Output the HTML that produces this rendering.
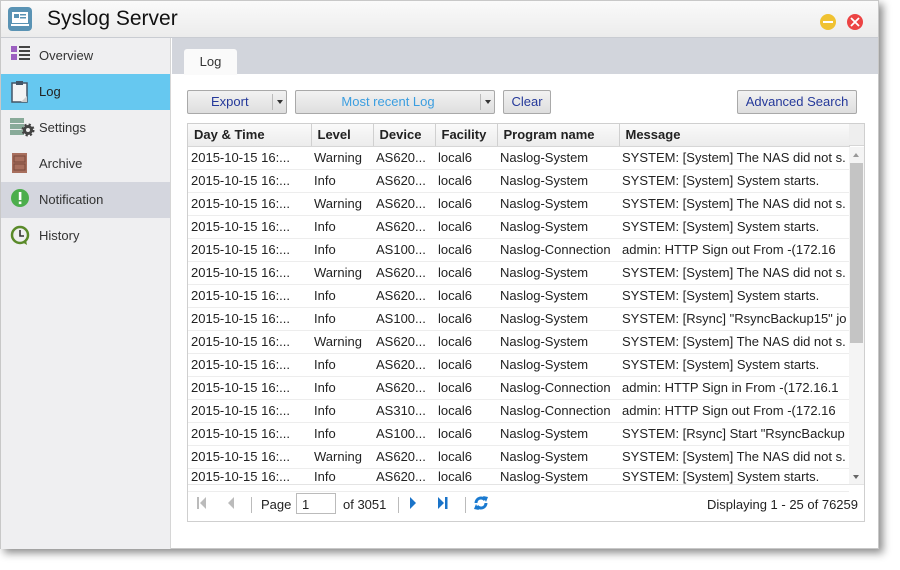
<!DOCTYPE html>
<html><head><meta charset="utf-8"><style>
*{box-sizing:border-box;margin:0;padding:0}
body{width:900px;height:570px;background:#fff;font-family:"Liberation Sans",sans-serif;position:relative;overflow:hidden}
.win{position:absolute;left:0;top:0;width:879px;height:549px;background:#fff;border:1px solid #c8c8c8;box-shadow:4px 4px 8px rgba(0,0,0,.45)}
.title{position:absolute;left:0;top:0;width:877px;height:37px;background:linear-gradient(#fafafa,#ececec);border-bottom:1px solid #c9ccd2}
.title .t{position:absolute;left:46px;top:6px;font-size:21px;color:#111}
.side{position:absolute;left:0;top:37px;width:170px;height:511px;background:#efeff1;border-right:1px solid #d6d6d6}
.item{height:36px;position:relative;font-size:13px;color:#333;line-height:36px;padding-left:38px}
.item.sel{background:#66c8f0;color:#222}
.item.hov{background:#d4d6de}
.ic{position:absolute;left:9px;top:7px}
.band{position:absolute;left:171px;top:37px;width:706px;height:36px;background:#d2d5dc}
.tab{position:absolute;left:183px;top:48px;width:53px;height:26px;background:#fafafa;border-radius:3px 3px 0 0;font-size:13px;color:#333;text-align:center;line-height:26px}
.btn{position:absolute;height:24px;border:1px solid #a9a9a9;border-radius:2px;background:linear-gradient(#f2f2f2,#dedede);font-size:13px;color:#25399a;line-height:22px;text-align:center}
.dd{position:absolute;right:0;top:3px;width:14px;height:16px;border-left:1px solid #bbb}
.dd:after{content:"";position:absolute;left:4px;top:6px;border:3px solid transparent;border-top:4px solid #333}
.grid{position:absolute;left:186px;top:122px;width:678px;height:399px;border:1px solid #cfcfcf}
table{border-collapse:collapse;font-size:13px;color:#222;table-layout:fixed;position:absolute;left:0;top:0;width:661px}
th{height:22px;background:linear-gradient(#fafafa,#ececec);text-align:left;font-weight:bold;padding-left:6px;border-right:1px solid #d0d0d0;border-bottom:1px solid #d6d6d6}
td{height:23px;padding-left:3px;white-space:nowrap;overflow:hidden;border-bottom:1px solid #ededed}
.hdrfill{position:absolute;left:661px;top:0;width:15px;height:22px;background:#eee;border-bottom:1px solid #d6d6d6}
.sb{position:absolute;left:661px;top:23px;width:15px;height:337px;background:#f4f4f4}
.thumb{position:absolute;left:1px;top:16px;width:13px;height:180px;background:#c4c4c4}
.pag{position:absolute;left:0;top:360px;width:676px;height:37px;font-size:13px;color:#222;border-top:1px solid #e4e4e4}
.pag span{position:absolute;top:12px}
.sep{position:absolute;top:12px;width:1px;height:16px;background:#bbb}
</style></head><body>
<div class="win">
<div class="title">
<svg style="position:absolute;left:7px;top:6px" width="24" height="24"><rect x="0" y="0" width="24" height="24" rx="4" fill="#5a93b4"/><rect x="4" y="5" width="16" height="11" fill="#fff"/><rect x="6" y="7" width="5" height="4" fill="#5a93b4"/><rect x="12" y="7" width="6" height="1.5" fill="#5a93b4"/><rect x="12" y="10" width="6" height="1.5" fill="#5a93b4"/><rect x="3" y="17" width="18" height="2" fill="#fff"/></svg>
<div class="t">Syslog Server</div>
<svg style="position:absolute;left:818px;top:12px" width="46" height="18"><circle cx="9" cy="9" r="8" fill="#f0c232"/><rect x="4" y="8" width="10" height="2" fill="#fff"/><circle cx="36" cy="9" r="8" fill="#ec4444"/><path d="M32 5l8 8M40 5l-8 8" stroke="#fff" stroke-width="1.8"/></svg>
</div>
<div class="side">
<div class="item"><svg class="ic" width="22" height="20"><rect x="1" y="1" width="6" height="6" fill="#9b5fc0"/><rect x="1" y="9" width="6" height="6" fill="#9b5fc0"/><path d="M9 2h11M9 6h11M9 10h11M9 14h11" stroke="#444" stroke-width="2"/></svg>Overview</div>
<div class="item sel"><svg class="ic" width="22" height="22"><rect x="2" y="2" width="15" height="19" fill="#f4f4f4" stroke="#456" stroke-width="1.5"/><rect x="6" y="0" width="7" height="4" fill="#456"/><path d="M11 21l6-6v6z" fill="#ccc"/></svg>Log</div>
<div class="item"><svg class="ic" width="26" height="22"><rect x="0" y="1" width="14" height="5" fill="#8a9"/><rect x="0" y="7" width="14" height="5" fill="#8a9"/><rect x="0" y="13" width="14" height="5" fill="#8a9"/><circle cx="18" cy="13" r="5" fill="#444" stroke="#444" stroke-width="3" stroke-dasharray="2 2"/><circle cx="18" cy="13" r="2" fill="#eee"/></svg>Settings</div>
<div class="item"><svg class="ic" width="22" height="22"><rect x="2" y="0" width="15" height="20" fill="#a86f5e"/><rect x="4" y="3" width="11" height="6" fill="none" stroke="#7a4a3c"/><rect x="4" y="11" width="11" height="6" fill="none" stroke="#7a4a3c"/></svg>Archive</div>
<div class="item hov"><svg class="ic" width="22" height="22"><circle cx="10" cy="9" r="9" fill="#4cae4c"/><rect x="8.8" y="3" width="2.6" height="8" fill="#fff"/><rect x="8.8" y="12.5" width="2.6" height="2.6" fill="#fff"/></svg>Notification</div>
<div class="item"><svg class="ic" width="22" height="22"><circle cx="10" cy="10" r="8" fill="none" stroke="#5a8a2a" stroke-width="2.5"/><path d="M10 5v6h4" stroke="#333" stroke-width="1.6" fill="none"/><path d="M12 17l5 3-1-5z" fill="#5a8a2a"/></svg>History</div>
</div>
<div class="band"></div>
<div class="tab">Log</div>
<div class="btn" style="left:186px;top:89px;width:100px;text-align:left;padding-left:23px">Export<div class="dd"></div></div>
<div class="btn" style="left:294px;top:89px;width:200px;color:#3b9ee0;padding-right:14px">Most recent Log<div class="dd"></div></div>
<div class="btn" style="left:502px;top:89px;width:48px">Clear</div>
<div class="btn" style="left:736px;top:89px;width:120px">Advanced Search</div>
<div class="grid">
<table>
<colgroup><col width="123"><col width="62"><col width="62"><col width="62"><col width="122"><col width="230"></colgroup>
<tr><th>Day &amp; Time</th><th>Level</th><th>Device</th><th>Facility</th><th>Program name</th><th>Message</th></tr>
<tr><td>2015-10-15 16:...</td><td>Warning</td><td>AS620...</td><td>local6</td><td>Naslog-System</td><td>SYSTEM: [System] The NAS did not s.</td></tr>
<tr><td>2015-10-15 16:...</td><td>Info</td><td>AS620...</td><td>local6</td><td>Naslog-System</td><td>SYSTEM: [System] System starts.</td></tr>
<tr><td>2015-10-15 16:...</td><td>Warning</td><td>AS620...</td><td>local6</td><td>Naslog-System</td><td>SYSTEM: [System] The NAS did not s.</td></tr>
<tr><td>2015-10-15 16:...</td><td>Info</td><td>AS620...</td><td>local6</td><td>Naslog-System</td><td>SYSTEM: [System] System starts.</td></tr>
<tr><td>2015-10-15 16:...</td><td>Info</td><td>AS100...</td><td>local6</td><td>Naslog-Connection</td><td>admin: HTTP Sign out From -(172.16</td></tr>
<tr><td>2015-10-15 16:...</td><td>Warning</td><td>AS620...</td><td>local6</td><td>Naslog-System</td><td>SYSTEM: [System] The NAS did not s.</td></tr>
<tr><td>2015-10-15 16:...</td><td>Info</td><td>AS620...</td><td>local6</td><td>Naslog-System</td><td>SYSTEM: [System] System starts.</td></tr>
<tr><td>2015-10-15 16:...</td><td>Info</td><td>AS100...</td><td>local6</td><td>Naslog-System</td><td>SYSTEM: [Rsync] "RsyncBackup15" jo</td></tr>
<tr><td>2015-10-15 16:...</td><td>Warning</td><td>AS620...</td><td>local6</td><td>Naslog-System</td><td>SYSTEM: [System] The NAS did not s.</td></tr>
<tr><td>2015-10-15 16:...</td><td>Info</td><td>AS620...</td><td>local6</td><td>Naslog-System</td><td>SYSTEM: [System] System starts.</td></tr>
<tr><td>2015-10-15 16:...</td><td>Info</td><td>AS620...</td><td>local6</td><td>Naslog-Connection</td><td>admin: HTTP Sign in From -(172.16.1</td></tr>
<tr><td>2015-10-15 16:...</td><td>Info</td><td>AS310...</td><td>local6</td><td>Naslog-Connection</td><td>admin: HTTP Sign out From -(172.16</td></tr>
<tr><td>2015-10-15 16:...</td><td>Info</td><td>AS100...</td><td>local6</td><td>Naslog-System</td><td>SYSTEM: [Rsync] Start "RsyncBackup</td></tr>
<tr><td>2015-10-15 16:...</td><td>Warning</td><td>AS620...</td><td>local6</td><td>Naslog-System</td><td>SYSTEM: [System] The NAS did not s.</td></tr>
<tr><td style="height:14px;vertical-align:top">2015-10-15 16:...</td><td style="vertical-align:top">Info</td><td style="vertical-align:top">AS620...</td><td style="vertical-align:top">local6</td><td style="vertical-align:top">Naslog-System</td><td style="vertical-align:top">SYSTEM: [System] System starts.</td></tr>
</table>
<div class="hdrfill"></div>
<div class="sb"><div class="thumb"></div>
<div style="position:absolute;left:4px;top:6px;border:3px solid transparent;border-bottom:4px solid #999;border-top:0"></div>
<div style="position:absolute;left:4px;top:328px;border:3px solid transparent;border-top:4px solid #666;border-bottom:0"></div></div>
<div class="pag">
<svg style="position:absolute;left:8px;top:11px" width="40" height="14"><rect x="1" y="1" width="2" height="12" fill="#bbb"/><path d="M10 1v12l-6-6z" fill="#bbb"/><path d="M38 1v12l-6-6z" fill="#bbb"/></svg>
<div class="sep" style="left:63px"></div>
<span style="left:73px">Page</span>
<div style="position:absolute;left:108px;top:8px;width:40px;height:21px;border:1px solid #bbb;font-size:13px;padding:3px 0 0 5px">1</div>
<span style="left:155px">of 3051</span>
<div class="sep" style="left:210px"></div>
<svg style="position:absolute;left:221px;top:11px" width="44" height="14"><path d="M1 1v12l6-6z" fill="#1a73c8"/><path d="M29 1v12l6-6z" fill="#1a73c8"/><rect x="36" y="1" width="2.5" height="12" fill="#1a73c8"/></svg>
<div class="sep" style="left:277px"></div>
<svg style="position:absolute;left:285px;top:9px" width="16" height="18"><path d="M3 9a5 5 0 0 1 9-3" stroke="#1a7ad0" stroke-width="3" fill="none"/><path d="M10 2l5 1-2 5z" fill="#1a7ad0"/><path d="M13 9a5 5 0 0 1-9 3" stroke="#1a7ad0" stroke-width="3" fill="none"/><path d="M6 16l-5-1 2-5z" fill="#1a7ad0"/></svg>
<span style="right:6px">Displaying 1 - 25 of 76259</span>
</div>
</div>
</div>
</body></html>
